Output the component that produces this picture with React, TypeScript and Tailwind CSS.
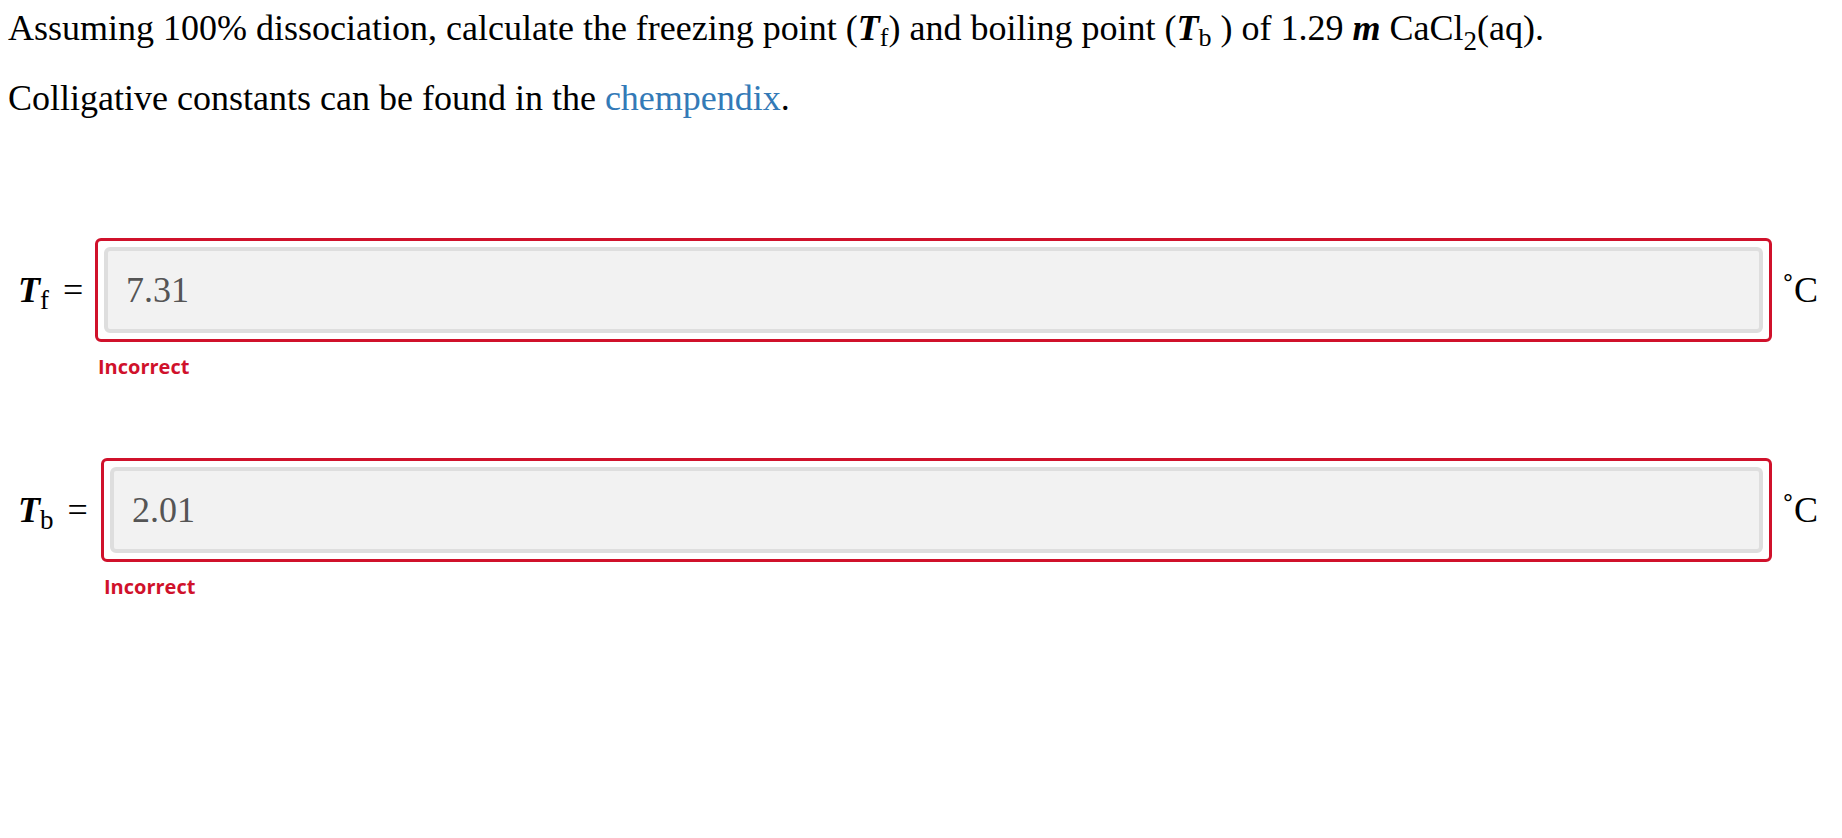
import React from "react";

interface AnswerRowProps {
  sub: string;
  value: string;
  labelWidth: string;
  incorrectPad: string;
}

function MathT({ sub, big }: { sub: string; big?: boolean }) {
  return (
    <span className="whitespace-nowrap">
      <span className="font-bold italic">T</span>
      <span className={big ? "relative top-[7px] text-[27px]" : "relative top-[6px] text-[26px]"}>{sub}</span>
    </span>
  );
}

function AnswerRow({ sub, value, labelWidth, incorrectPad }: AnswerRowProps) {
  return (
    <div>
      <div className="flex items-center">
        <div className={`${labelWidth} shrink-0 pl-[10px] text-[36px] leading-none text-black`}>
          <MathT sub={sub} big />
          <span className="ml-[14px]">=</span>
        </div>
        <div className="flex-1 rounded-md border-[3px] border-[#d0112b] p-[6px]">
          <div className="flex h-[86px] items-center rounded-md border-4 border-[#dedede] bg-[#f2f2f2] pl-[18px] text-[36px] text-[#555555]">
            {value}
          </div>
        </div>
        <div className="w-[62px] shrink-0 pl-[10px] text-[36px] text-black">
          <span className="relative -top-[2px]">˚</span>C
        </div>
      </div>
      <p className={`mt-[10px] ${incorrectPad} font-['Open_Sans',sans-serif] text-[20px] font-bold leading-[1.5] text-[#d0112b]`}>
        Incorrect
      </p>
    </div>
  );
}

export default function App() {
  return (
    <div className="min-h-screen bg-white px-2 pt-[4px] font-['Liberation_Serif',serif] text-[36px] leading-[48px] text-black">
      <p>
        Assuming 100% dissociation, calculate the freezing point (<MathT sub="f" />) and boiling point (
        <MathT sub="b" /> ) of 1.29 <span className="font-bold italic">m</span> CaCl
        <span className="relative top-[10px] text-[27px]">2</span>(aq).
      </p>
      <p className="mt-[18px]">
        Colligative constants can be found in the{" "}
        <a href="#" className="text-[#337ab7]">
          chempendix
        </a>
        .
      </p>

      <div className="mt-[116px]">
        <AnswerRow sub="f" value="7.31" labelWidth="w-[87px]" incorrectPad="pl-[90px]" />
        <div className="mt-[76px]">
          <AnswerRow sub="b" value="2.01" labelWidth="w-[93px]" incorrectPad="pl-[96px]" />
        </div>
      </div>
    </div>
  );
}
